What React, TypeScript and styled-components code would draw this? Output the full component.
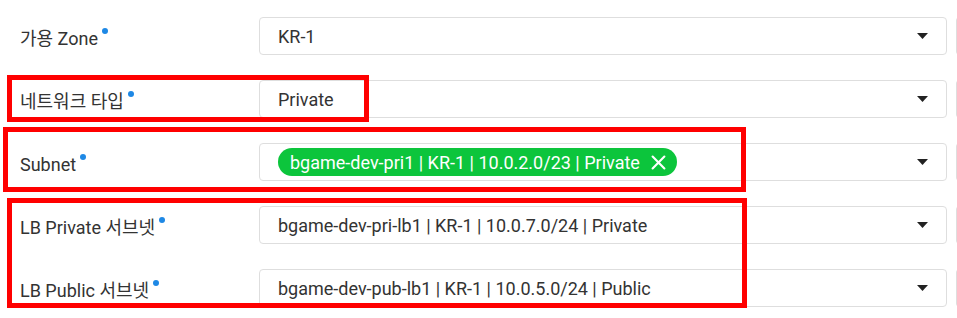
import React from "react";
import styled, { createGlobalStyle } from "styled-components";

const Global = createGlobalStyle`
  html, body { margin: 0; padding: 0; background: #fff; }
  body { font-family: Roboto, "Noto Sans CJK KR", sans-serif; color: #333; overflow: hidden; }
`;

const Page = styled.div`
  position: relative;
  width: 957px;
  height: 318px;
  padding: 17px 0 0 20px;
  box-sizing: border-box;
  display: flex;
  flex-direction: column;
  gap: 25px;
`;

const Row = styled.div`
  display: grid;
  grid-template-columns: 239px 688px 30px;
  align-items: center;
  height: 38px;
`;

const Label = styled.div`
  font-size: 18px;
  line-height: 22px;
  color: #333;
  display: flex;
  align-items: flex-start;
  padding-top: 5px;
`;

const Required = styled.span`
  width: 6px;
  height: 6px;
  border-radius: 50%;
  background: #1e88e5;
  margin-left: 4px;
  margin-top: 0px;
`;

const Select = styled.div`
  height: 38px;
  box-sizing: border-box;
  border: 1px solid #dedede;
  border-radius: 4px;
  display: flex;
  align-items: center;
  padding: 0 18px 0 18px;
  font-size: 18px;
  color: #333;
`;

const Value = styled.div`
  flex: 1;
  white-space: nowrap;
`;

const Tag = styled.span`
  display: inline-flex;
  align-items: center;
  height: 28px;
  padding: 0 11px 0 12px;
  border-radius: 14px;
  background: #0cc53c;
  color: #fff;
  font-size: 18px;
  gap: 11px;
`;

const Caret = styled.svg`
  width: 11px;
  height: 6px;
  flex: none;
`;

const Side = styled.div`
  margin-left: 9px;
  height: 38px;
  box-sizing: border-box;
  border: 1px solid #dedede;
  border-right: none;
  border-radius: 4px 0 0 4px;
`;

const Highlight = styled.div<{ $x: number; $y: number; $w: number; $h: number }>`
  position: absolute;
  left: ${(p) => p.$x}px;
  top: ${(p) => p.$y}px;
  width: ${(p) => p.$w}px;
  height: ${(p) => p.$h}px;
  border: 5px solid #ff0000;
  box-sizing: border-box;
  pointer-events: none;
`;

const CaretIcon = () => (
  <Caret viewBox="0 0 11 6">
    <path d="M0 0 H11 L5.5 6 Z" fill="#222" />
  </Caret>
);

const CloseIcon = () => (
  <svg width="15" height="15" viewBox="0 0 14 14">
    <path d="M1.5 1.5 L12.5 12.5 M12.5 1.5 L1.5 12.5" stroke="#fff" strokeWidth="2" strokeLinecap="round" />
  </svg>
);

type Field = { label: string; value: React.ReactNode };

const fields: Field[] = [
  { label: "가용 Zone", value: "KR-1" },
  { label: "네트워크 타입", value: "Private" },
  {
    label: "Subnet",
    value: (
      <Tag>
        bgame-dev-pri1 | KR-1 | 10.0.2.0/23 | Private
        <CloseIcon />
      </Tag>
    ),
  },
  { label: "LB Private 서브넷", value: "bgame-dev-pri-lb1 | KR-1 | 10.0.7.0/24 | Private" },
  { label: "LB Public 서브넷", value: "bgame-dev-pub-lb1 | KR-1 | 10.0.5.0/24 | Public" },
];

export default function App() {
  return (
    <>
      <Global />
      <Page>
        {fields.map((f) => (
          <Row key={f.label}>
            <Label>
              {f.label}
              <Required />
            </Label>
            <Select>
              <Value>{f.value}</Value>
              <CaretIcon />
            </Select>
            <Side />
          </Row>
        ))}
        <Highlight $x={7} $y={75} $w={362} $h={47} />
        <Highlight $x={3} $y={127} $w={743} $h={65} />
        <Highlight $x={7} $y={198} $w={740} $h={110} />
      </Page>
    </>
  );
}
